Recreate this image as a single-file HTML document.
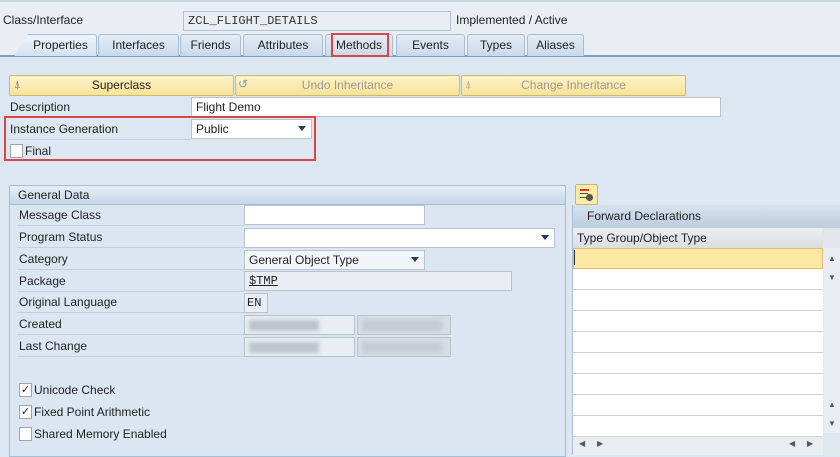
<!DOCTYPE html>
<html><head><style>
*{box-sizing:border-box;margin:0;padding:0}
body{width:840px;height:455px;overflow:hidden;background:#dde7f1;font-family:"Liberation Sans",sans-serif;font-size:12px;color:#222;position:relative}
.a{position:absolute}
.top{left:0;top:0;width:840px;height:56px;background:#e9eef4;border-top:2px solid #cfd8e2}
.inp{position:absolute;background:#fff;border:1px solid #b9c3cd;height:20px;padding:1px 4px;line-height:17px}
.ro{background:#e8eef4;border:1px solid #b8c2cc}
.tab{position:absolute;top:34px;height:22px;background:linear-gradient(#e4ecf5,#c9d9ea);border:1px solid #a9bdd2;border-bottom:none;text-align:center;line-height:20px;border-radius:3px 3px 0 0}
.btn{position:absolute;top:75px;height:21px;background:linear-gradient(#fdf3c8,#f7e296);border:1px solid #cbb979;border-radius:2px;text-align:center;line-height:19px}
.lbl{position:absolute;left:17px;width:227px;height:21px;line-height:20px;padding-left:2px;border-bottom:1px solid #c2cfdc}
.cb{position:absolute;width:13px;height:14px;background:#fff;border:1px solid #9aa5b0;font-size:11px;line-height:12px;text-align:center}
.dd{position:absolute;right:5px;top:6px;width:0;height:0;border-left:4px solid transparent;border-right:4px solid transparent;border-top:5px solid #2a3a5a}
.row{position:absolute;left:573px;width:250px;height:21px;background:#fff;border-bottom:1px solid #c9d2dc}
.mono{font-family:"Liberation Mono",monospace}
</style></head><body>
<div class="a top"></div>
<div class="a" style="left:3px;top:13px">Class/Interface</div>
<div class="inp ro mono" style="left:183px;top:11px;width:268px;font-size:12px;color:#333">ZCL_FLIGHT_DETAILS</div>
<div class="a" style="left:456px;top:13px">Implemented / Active</div>
<div class="a" style="left:0;top:55px;width:840px;height:2px;background:#7d9fc4"></div>
<div class="tab" style="left:14px;width:83px;background:linear-gradient(#eef4fa,#d3e1ef);clip-path:polygon(14px 0,100% 0,100% 100%,0 100%);padding-left:10px">Properties</div>
<div class="tab" style="left:98px;width:81px">Interfaces</div>
<div class="tab" style="left:180px;width:61px">Friends</div>
<div class="tab" style="left:243px;width:80px">Attributes</div>
<div class="tab" style="left:325px;width:68px">Methods</div>
<div class="a" style="left:331px;top:33px;width:58px;height:24px;border:2px solid #d9464a"></div>
<div class="tab" style="left:396px;width:69px">Events</div>
<div class="tab" style="left:467px;width:58px">Types</div>
<div class="tab" style="left:527px;width:57px">Aliases</div>

<div class="btn" style="left:9px;width:225px">Superclass</div>
<div class="a" style="left:14px;top:79px;color:#6a7a8a;font-size:11px">⍋</div>
<div class="btn" style="left:235px;width:225px;color:#9a9a9a">Undo Inheritance</div>
<div class="a" style="left:238px;top:77px;color:#8aa0b8;font-size:12px">↺</div>
<div class="btn" style="left:461px;width:225px;color:#9a9a9a">Change Inheritance</div>
<div class="a" style="left:465px;top:79px;color:#a0a8b0;font-size:11px">⍋</div>

<div class="a" style="left:10px;top:100px">Description</div>
<div class="inp" style="left:191px;top:97px;width:530px">Flight Demo</div>
<div class="a" style="left:10px;top:122px">Instance Generation</div>
<div class="a" style="left:8px;top:139px;width:183px;height:1px;background:#c2cfdc"></div>
<div class="inp" style="left:191px;top:119px;width:121px">Public<div class="dd"></div></div>
<div class="cb" style="left:10px;top:144px"></div>
<div class="a" style="left:25px;top:144px">Final</div>
<div class="a" style="left:4px;top:116px;width:312px;height:45px;border:2px solid #d9464a"></div>

<div class="a" style="left:9px;top:185px;width:557px;height:272px;border:1px solid #a9bdd2;background:#dbe6f2"></div>
<div class="a" style="left:10px;top:186px;width:555px;height:19px;background:linear-gradient(#e6eef7,#c7d7e8);border-bottom:1px solid #a9bdd2;padding-left:8px;line-height:18px">General Data</div>
<div class="lbl" style="top:205px">Message Class</div>
<div class="inp" style="left:244px;top:205px;width:181px"></div>
<div class="lbl" style="top:227px">Program Status</div>
<div class="inp" style="left:244px;top:228px;width:311px"><div class="dd"></div></div>
<div class="lbl" style="top:249px">Category</div>
<div class="inp" style="left:244px;top:250px;width:181px;background:#f2f5f8">General Object Type<div class="dd"></div></div>
<div class="lbl" style="top:271px">Package</div>
<div class="inp ro mono" style="left:244px;top:271px;width:268px;font-size:12px;text-decoration:underline">$TMP</div>
<div class="lbl" style="top:292px">Original Language</div>
<div class="inp ro mono" style="left:244px;top:293px;width:24px;font-size:12px;padding:1px 2px">EN</div>
<div class="lbl" style="top:314px">Created</div>
<div class="inp ro" style="left:244px;top:315px;width:111px"><div class="a" style="left:4px;top:4px;width:70px;height:11px;background:#bcc4cc;filter:blur(2px)"></div></div>
<div class="inp ro" style="left:357px;top:315px;width:94px;background:#d6dde4"><div class="a" style="left:4px;top:4px;width:80px;height:11px;background:#c4cbd2;filter:blur(2px)"></div></div>
<div class="lbl" style="top:336px">Last Change</div>
<div class="inp ro" style="left:244px;top:337px;width:111px"><div class="a" style="left:4px;top:4px;width:70px;height:11px;background:#bcc4cc;filter:blur(2px)"></div></div>
<div class="inp ro" style="left:357px;top:337px;width:94px;background:#d6dde4"><div class="a" style="left:4px;top:4px;width:80px;height:11px;background:#c4cbd2;filter:blur(2px)"></div></div>
<div class="cb" style="left:19px;top:383px">✓</div><div class="a" style="left:34px;top:383px">Unicode Check</div>
<div class="cb" style="left:19px;top:405px">✓</div><div class="a" style="left:34px;top:405px">Fixed Point Arithmetic</div>
<div class="cb" style="left:19px;top:427px"></div><div class="a" style="left:34px;top:427px">Shared Memory Enabled</div>

<div class="a" style="left:575px;top:184px;width:23px;height:21px;background:#fbeaa8;border:1px solid #c9b574;border-radius:2px">
<div class="a" style="left:4px;top:4px;width:9px;height:2px;background:#d04020"></div>
<div class="a" style="left:4px;top:8px;width:8px;height:1px;background:#555"></div>
<div class="a" style="left:4px;top:12px;width:8px;height:1px;background:#555"></div>
<div class="a" style="left:10px;top:9px;width:7px;height:7px;border-radius:50%;background:#555"></div></div>
<div class="a" style="left:572px;top:205px;width:268px;height:250px;background:#dfe7ef;border-left:1px solid #a9bdd2"></div>
<div class="a" style="left:573px;top:205px;width:267px;height:23px;background:linear-gradient(#d6e2ee,#bccddf);padding-left:14px;line-height:22px">Forward Declarations</div>
<div class="a" style="left:573px;top:228px;width:250px;height:20px;background:linear-gradient(#eceff2,#d9dee3);padding-left:4px;line-height:20px">Type Group/Object Type</div>
<div class="a" style="left:823px;top:228px;width:17px;height:20px;background:#e1e6eb"></div>
<div class="row" style="top:248px;background:#fce7a4;border:1px solid #e0c070"></div>
<div class="a" style="left:574px;top:250px;width:1px;height:15px;background:#333"></div>
<div class="row" style="top:269px"></div><div class="row" style="top:290px"></div><div class="row" style="top:311px"></div><div class="row" style="top:332px"></div><div class="row" style="top:353px"></div><div class="row" style="top:374px"></div><div class="row" style="top:395px"></div><div class="row" style="top:416px"></div>
<div class="a" style="left:823px;top:248px;width:17px;height:185px;background:#e8edf2"></div>
<div class="a" style="left:828px;top:254px;font-size:8px;color:#556">▲</div>
<div class="a" style="left:828px;top:273px;font-size:8px;color:#556">▼</div>
<div class="a" style="left:828px;top:400px;font-size:8px;color:#556">▲</div>
<div class="a" style="left:828px;top:419px;font-size:8px;color:#556">▼</div>
<div class="a" style="left:573px;top:437px;width:250px;height:18px;background:#e8edf2;font-size:8px;color:#556;line-height:14px"><span style="position:absolute;left:6px">◀</span><span style="position:absolute;left:24px">▶</span><span style="position:absolute;left:216px">◀</span><span style="position:absolute;left:234px">▶</span></div>
</body></html>
